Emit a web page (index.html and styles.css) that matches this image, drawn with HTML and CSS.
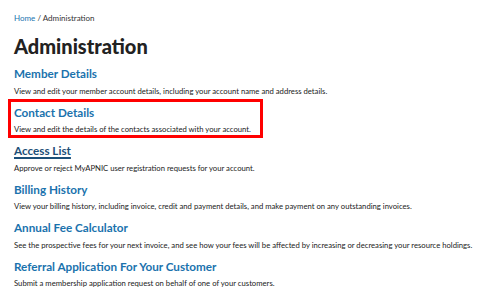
FILE: index.html
```html
<!DOCTYPE html>
<html>
<head>
<meta charset="utf-8">
<link rel="stylesheet" href="styles.css">
</head>
<body>
<main class="page">
  <nav class="crumbs"><a href="#" class="crumb-link">Home</a> / Administration</nav>
  <h1 class="title">Administration</h1>
  <section class="item">
    <h2 class="item-title"><a href="#">Member Details</a></h2>
    <p class="item-desc">View and edit your member account details, including your account name and address details.</p>
  </section>
  <section class="item item-highlight">
    <h2 class="item-title"><a href="#">Contact Details</a></h2>
    <p class="item-desc">View and edit the details of the contacts associated with your account.</p>
  </section>
  <section class="item">
    <h2 class="item-title"><a href="#" class="active">Access List</a></h2>
    <p class="item-desc">Approve or reject MyAPNIC user registration requests for your account.</p>
  </section>
  <section class="item">
    <h2 class="item-title"><a href="#">Billing History</a></h2>
    <p class="item-desc">View your billing history, including invoice, credit and payment details, and make payment on any outstanding invoices.</p>
  </section>
  <section class="item">
    <h2 class="item-title"><a href="#">Annual Fee Calculator</a></h2>
    <p class="item-desc">See the prospective fees for your next invoice, and see how your fees will be affected by increasing or decreasing your resource holdings.</p>
  </section>
  <section class="item">
    <h2 class="item-title"><a href="#">Referral Application For Your Customer</a></h2>
    <p class="item-desc">Submit a membership application request on behalf of one of your customers.</p>
  </section>
</main>
</body>
</html>
```
FILE: styles.css
```css
html, body {
  margin: 0;
  padding: 0;
  background: #fff;
}
body {
  font-family: Lato, "Liberation Sans", sans-serif;
  color: #222;
}
.page {
  padding: 12px 0 0 14px;
}
.crumbs {
  font-size: 8px;
  line-height: 12px;
  color: #333;
}
.crumb-link {
  color: #1a75b0;
  text-decoration: none;
}
.title {
  margin: 10px 0 7px;
  font-size: 20px;
  line-height: 24px;
  font-weight: 900;
  color: #222;
}
.item {
  position: relative;
  padding-bottom: 7px;
}
.item-title {
  margin: 0;
  font-size: 11.7px;
  line-height: 16px;
  font-weight: 700;
}
.item-title a {
  color: #1a72ad;
  text-decoration: none;
}
.item-title a.active {
  color: #1c4f78;
  text-decoration: underline;
  text-decoration-thickness: 1.5px;
  text-underline-offset: 2px;
}
.item-desc {
  margin: 3.5px 0 0;
  font-size: 7.7px;
  line-height: 12px;
  color: #222;
}
.item-highlight::after {
  content: "";
  position: absolute;
  left: -6px;
  top: -5px;
  width: 255px;
  height: 39px;
  box-sizing: border-box;
  border: 3px solid #f00;
}
```
